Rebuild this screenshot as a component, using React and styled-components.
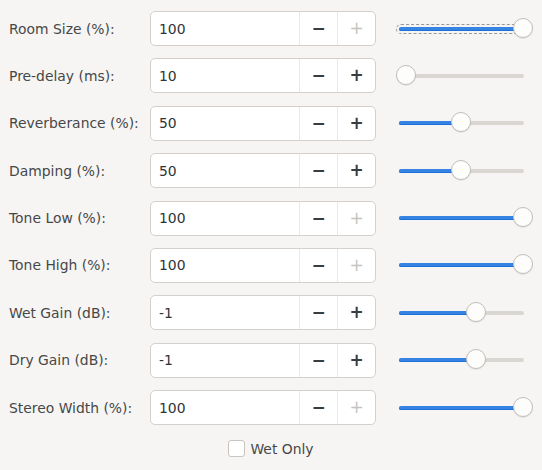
import React from 'react';
import styled, { createGlobalStyle } from 'styled-components';

const PARAMS = [
  { label: 'Room Size (%):', value: '100', frac: 1, canUp: false, focused: true },
  { label: 'Pre-delay (ms):', value: '10', frac: 0, canUp: true },
  { label: 'Reverberance (%):', value: '50', frac: 0.47, canUp: true },
  { label: 'Damping (%):', value: '50', frac: 0.47, canUp: true },
  { label: 'Tone Low (%):', value: '100', frac: 1, canUp: false },
  { label: 'Tone High (%):', value: '100', frac: 1, canUp: false },
  { label: 'Wet Gain (dB):', value: '-1', frac: 0.6, canUp: true },
  { label: 'Dry Gain (dB):', value: '-1', frac: 0.6, canUp: true },
  { label: 'Stereo Width (%):', value: '100', frac: 1, canUp: false },
];

const THUMB_TRAVEL = 117;

export default function App() {
  return (
    <>
      <GlobalStyle />
      <Page>
        <ParamGrid>
          {PARAMS.map(item => (
            <React.Fragment key={item.label}>
              <ParamLabel>{item.label}</ParamLabel>
              <SpinBox>
                <SpinEntry>{item.value}</SpinEntry>
                <SpinButton>
                  <Glyph>−</Glyph>
                </SpinButton>
                <SpinButton disabled={!item.canUp}>
                  <Glyph>+</Glyph>
                </SpinButton>
              </SpinBox>
              <Slider>
                <Track focused={item.focused}>
                  <Fill style={{ width: `${item.frac * THUMB_TRAVEL + 7}px` }} />
                </Track>
                <Thumb style={{ left: `${item.frac * THUMB_TRAVEL}px` }} />
              </Slider>
            </React.Fragment>
          ))}
        </ParamGrid>
        <CheckRow>
          <CheckBox />
          <CheckLabel>Wet Only</CheckLabel>
        </CheckRow>
      </Page>
    </>
  );
}

const GlobalStyle = createGlobalStyle`
  html, body {
    margin: 0;
    background: #f6f5f4;
  }
  body {
    font-family: "DejaVu Sans", "Noto Sans", sans-serif;
    font-size: 13.9px;
    color: #2e3436;
  }
`;

const Page = styled.div`
  width: 542px;
  height: 470px;
  padding: 11px 0 0 9px;
  box-sizing: border-box;
  display: flex;
  flex-direction: column;
`;

const ParamGrid = styled.div`
  display: grid;
  grid-template-columns: 141px 226px 157px;
  grid-auto-rows: 35px;
  row-gap: 12.4px;
  align-items: center;
`;

const ParamLabel = styled.span`
  color: #464848;
  white-space: nowrap;
`;

const SpinBox = styled.div`
  display: flex;
  height: 35px;
  box-sizing: border-box;
  background: #ffffff;
  border: 1px solid #d5d0cc;
  border-radius: 5px;
  overflow: hidden;
`;

const SpinEntry = styled.div`
  flex: 1;
  display: flex;
  align-items: center;
  padding-left: 8px;
  color: #2e3436;
`;

const SpinButton = styled.div`
  width: 37px;
  display: flex;
  align-items: center;
  justify-content: center;
  border-left: 1px solid #ebe9e6;
  color: ${p => (p.disabled ? '#c6c4c1' : '#3a3c3d')};
  font-weight: ${p => (p.disabled ? 400 : 700)};
`;

const Glyph = styled.span`
  font-size: 17px;
  line-height: 1;
`;

const Slider = styled.div`
  position: relative;
  margin-left: 20px;
  width: 137px;
  height: 20px;
  display: flex;
  align-items: center;
`;

const Track = styled.div`
  margin-left: 3px;
  width: 125px;
  height: 4px;
  border-radius: 2px;
  background: #dad6d2;
  outline: ${p => (p.focused ? '1px dashed #9a9996' : 'none')};
  outline-offset: 2px;
  display: flex;
`;

const Fill = styled.div`
  height: 100%;
  max-width: 100%;
  border-radius: 2px;
  background: #3584e4;
  box-shadow: inset 0 -1px 0 #1c71d8;
`;

const Thumb = styled.div`
  position: absolute;
  top: -1px;
  width: 20px;
  height: 20px;
  box-sizing: border-box;
  border-radius: 50%;
  background: #fdfdfc;
  border: 1px solid #c3bdb8;
  box-shadow: 0 1px 1px rgba(0, 0, 0, 0.08);
`;

const CheckRow = styled.div`
  display: flex;
  align-items: center;
  justify-content: center;
  gap: 5px;
  margin-top: 15px;
  padding-right: 9px;
`;

const CheckBox = styled.div`
  width: 17px;
  height: 17px;
  box-sizing: border-box;
  background: #ffffff;
  border: 1px solid #c9c4bf;
  border-radius: 3px;
`;

const CheckLabel = styled.span`
  color: #464848;
`;
